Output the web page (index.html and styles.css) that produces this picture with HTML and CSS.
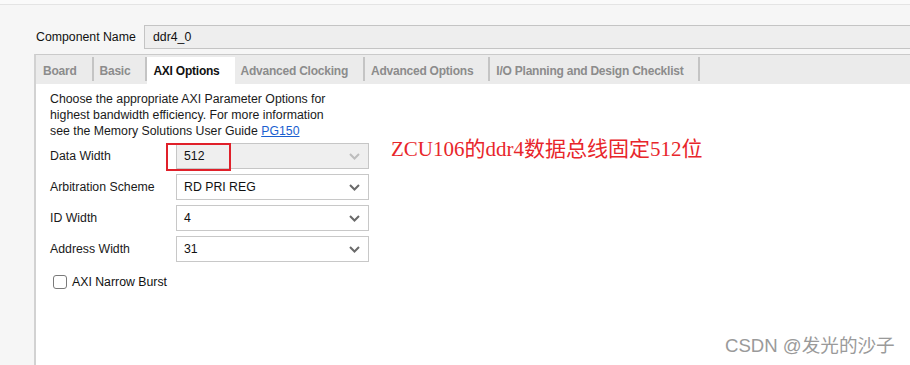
FILE: index.html
```html
<!DOCTYPE html>
<html>
<head>
<meta charset="utf-8">
<link rel="stylesheet" href="styles.css">
</head>
<body>
<div class="top-strip"></div>
<div class="main">
  <div class="comp-row">
    <span class="comp-label">Component Name</span>
    <div class="comp-input">ddr4_0</div>
  </div>
  <div class="panel">
    <div class="tabbar">
      <div class="tab first">Board</div><span class="sep"></span>
      <div class="tab">Basic</div><span class="sep"></span>
      <div class="tab active">AXI Options</div>
      <div class="tab">Advanced Clocking</div><span class="sep"></span>
      <div class="tab">Advanced Options</div><span class="sep"></span>
      <div class="tab">I/O Planning and Design Checklist</div><span class="sep"></span>
    </div>
    <div class="content">
      <p class="desc">Choose the appropriate AXI Parameter Options for<br>highest bandwidth efficiency. For more information<br>see the Memory Solutions User Guide <a class="link" href="#">PG150</a></p>
      <div class="form">
        <span class="flabel">Data Width</span>
        <div class="select disabled"><span>512</span><svg class="chev" width="11" height="7" viewBox="0 0 11 7"><polyline points="1,1 5.5,5.5 10,1" fill="none" stroke-width="2"/></svg></div>
        <span class="flabel">Arbitration Scheme</span>
        <div class="select"><span>RD PRI REG</span><svg class="chev" width="11" height="7" viewBox="0 0 11 7"><polyline points="1,1 5.5,5.5 10,1" fill="none" stroke-width="2"/></svg></div>
        <span class="flabel">ID Width</span>
        <div class="select"><span>4</span><svg class="chev" width="11" height="7" viewBox="0 0 11 7"><polyline points="1,1 5.5,5.5 10,1" fill="none" stroke-width="2"/></svg></div>
        <span class="flabel">Address Width</span>
        <div class="select"><span>31</span><svg class="chev" width="11" height="7" viewBox="0 0 11 7"><polyline points="1,1 5.5,5.5 10,1" fill="none" stroke-width="2"/></svg></div>
      </div>
      <div class="check-row">
        <span class="checkbox"></span>
        <span class="check-label">AXI Narrow Burst</span>
      </div>
    </div>
  </div>
</div>
<div class="red-box"></div>
<div class="annot">ZCU106的ddr4数据总线固定512位</div>
<div class="watermark">CSDN @发光的沙子</div>
</body>
</html>
```
FILE: styles.css
```css
html, body {
  margin: 0;
  padding: 0;
  height: 365px;
  overflow: hidden;
}
body {
  background: #f6f6f6;
  font-family: "Liberation Sans", Arial, sans-serif;
  font-size: 12.3px;
  color: #1a1a1a;
  position: relative;
}
.top-strip {
  height: 4px;
  background: #fafafa;
  border-bottom: 1px solid #e4e4e4;
}
.main {
  padding-left: 34px;
}
.comp-row {
  display: flex;
  align-items: center;
  margin-top: 20px;
  height: 24px;
}
.comp-label {
  width: 108px;
  padding-left: 2px;
  color: #111;
}
.comp-input {
  flex: 1;
  height: 22px;
  line-height: 22px;
  background: #eeeeee;
  border: 1px solid #c4c4c4;
  border-right: none;
  padding-left: 8px;
  color: #111;
}
.panel {
  margin-top: 5px;
  border-top: 1px solid #cacaca;
  border-left: 2px solid #d2d2d2;
  height: 311px;
  display: flex;
  flex-direction: column;
}
.tabbar {
  display: flex;
  height: 27px;
  padding-top: 2px;
  background: #ebebeb;
}
.tab {
  height: 27px;
  display: flex;
  align-items: center;
  padding: 0 15px 0 6px;
  font-size: 12px;
  font-weight: bold;
  letter-spacing: -0.23px;
  color: #8c8c8c;
  white-space: nowrap;
}
.tab.first {
  padding-left: 7px;
}
.tab.active {
  background: #ffffff;
  color: #111;
}
.sep {
  width: 2px;
  height: 24px;
  background: #c4c4c4;
  flex: none;
}
.content {
  flex: 1;
  background: #ffffff;
  padding: 7px 0 0 14px;
}
.desc {
  margin: 0;
  line-height: 16px;
  color: #1a1a1a;
}
.link {
  color: #1a5fd0;
  text-decoration: underline;
}
.form {
  margin-top: 4px;
  display: grid;
  grid-template-columns: 126px 193px;
  grid-auto-rows: 26px;
  row-gap: 5px;
  align-items: center;
}
.flabel {
  color: #1a1a1a;
}
.select {
  height: 24px;
  border: 1px solid #c8c8c8;
  background: #ffffff;
  display: flex;
  align-items: center;
  justify-content: space-between;
  padding: 0 8px 0 7px;
  color: #111;
}
.select.disabled {
  background: #efefef;
  border-color: #c6c6c6;
}
.chev {
  stroke: #6a6a6a;
}
.select.disabled .chev {
  stroke: #bdbdbd;
}
.check-row {
  display: flex;
  align-items: center;
  margin-top: 12px;
  margin-left: 3px;
  height: 15px;
}
.checkbox {
  width: 12px;
  height: 12px;
  border: 1px solid #7a7a7a;
  border-radius: 3px;
  background: #fff;
  margin-right: 5px;
}
.check-label {
  color: #111;
}
.red-box {
  position: absolute;
  left: 166px;
  top: 143px;
  width: 61px;
  height: 24px;
  border: 2px solid #e0202a;
}
.annot {
  position: absolute;
  left: 391px;
  top: 139px;
  font-family: "Liberation Serif", "Noto Sans CJK SC", serif;
  font-size: 21px;
  line-height: 21px;
  color: #e8262b;
  white-space: nowrap;
}
.watermark {
  position: absolute;
  left: 725px;
  top: 335px;
  font-family: "Liberation Sans", "Noto Sans CJK SC", sans-serif;
  font-size: 18.6px;
  line-height: 22px;
  color: #9a9a9a;
  white-space: nowrap;
}
```
